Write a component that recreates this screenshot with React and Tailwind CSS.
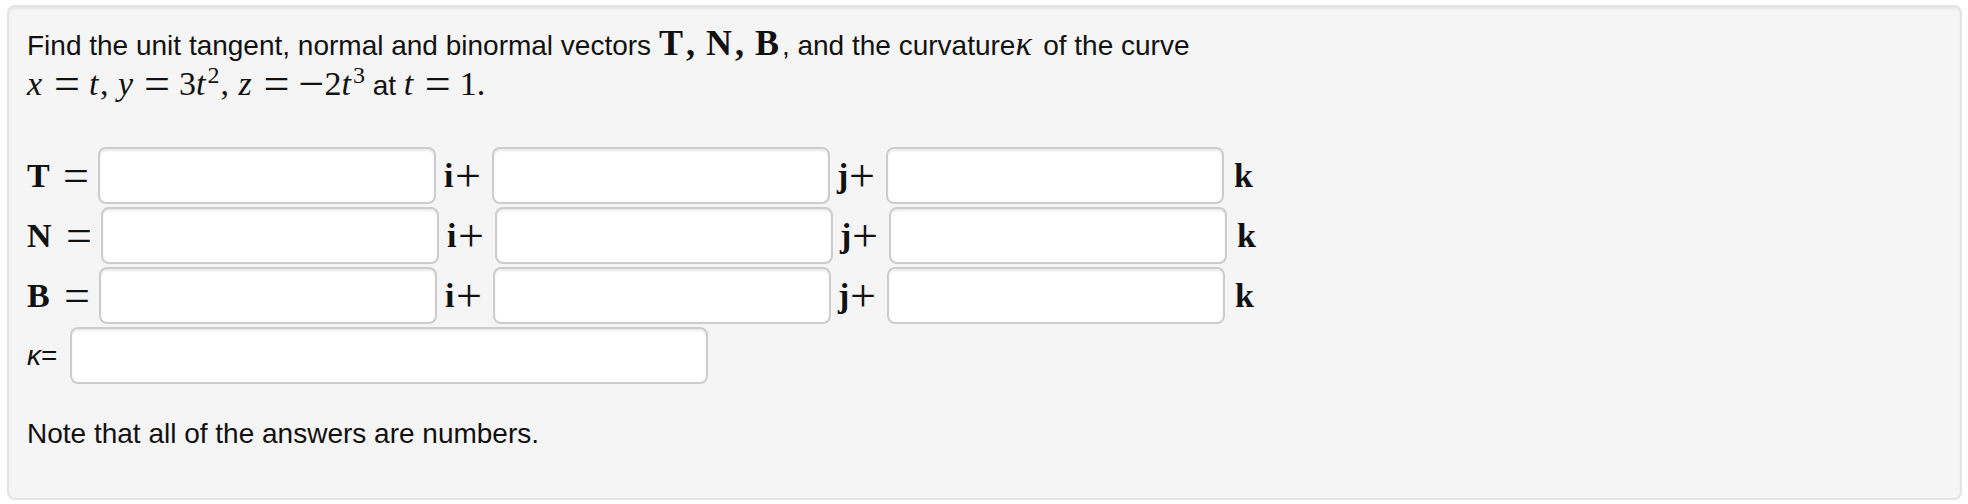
import React from 'react';

// wide "=" like the math font: bigger glyph, zero line-height so it never grows the line
const Rel = ({ children }) => (
  <span className="relative top-[4px] inline-block w-[26px] mx-[9px] text-center text-[46px] leading-[0]">{children}</span>
);

const Bin = ({ children }) => (
  <span className="relative top-[4px] inline-block w-[26px] text-center text-[46px] leading-[0]">{children}</span>
);

const AnswerBox = ({ w = 'w-[338px]' }) => (
  <input
    type="text"
    className={`${w} h-[57px] shrink-0 bg-white border-2 border-[#cccccc] rounded-[8px] shadow-[inset_0_2px_2px_rgba(0,0,0,0.075)] outline-none`}
  />
);

const VecRow = ({ label, labelW }) => (
  <div className="flex items-center h-[57px] font-['Liberation_Serif',serif] text-[34px]">
    <span className="leading-none">
      <span className={`inline-block ${labelW} font-bold`}>{label}</span>
      <Rel>=</Rel>
    </span>
    <AnswerBox />
    <span className="leading-none ml-[8px] mr-[11px]">
      <span className="inline-block w-[11px] font-bold">i</span>
      <Bin>+</Bin>
    </span>
    <AnswerBox />
    <span className="leading-none ml-[7px] mr-[11px]">
      <span className="inline-block w-[12px] font-bold">j</span>
      <Bin>+</Bin>
    </span>
    <AnswerBox />
    <span className="leading-none ml-[10px] font-bold">k</span>
  </div>
);

export default function App() {
  return (
    <div className="min-h-[504px] bg-white pt-[5px] pl-[7px] pr-[6px] text-[#111] font-['Liberation_Sans',Arial,sans-serif]">
      <div className="h-[495px] bg-[#f5f5f5] border-2 border-[#e3e3e3] rounded-[8px] shadow-[inset_0_2px_2px_rgba(0,0,0,0.05)] pt-[18px] px-[18px]">
        <p className="text-[28px] leading-[40px]">
          Find the unit tangent, normal and binormal vectors{' '}
          <span className="font-['Liberation_Serif',serif] text-[36px] leading-none font-bold">
            <span className="inline-block w-[27px]">T</span>
            <span className="inline-block w-[11px] mr-[9px]">,</span>
            <span className="inline-block w-[29px]">N</span>
            <span className="inline-block w-[11px] mr-[9px]">,</span>
            <span className="inline-block w-[27px]">B</span>
          </span>
          , and the curvature
          <span className="inline-block w-[20px] font-['Liberation_Serif',serif] italic text-[34px] leading-none">κ</span>
          {' '}of the curve
          <br />
          <span className="font-['Liberation_Serif',serif] text-[34px] leading-none">
            <span className="inline-block w-[18px] italic">x</span>
            <Rel>=</Rel>
            <span className="inline-block w-[11px] italic">t</span>
            <span className="inline-block w-[9px] mr-[9px]">,</span>
            <span className="inline-block w-[17px] italic">y</span>
            <Rel>=</Rel>
            <span className="inline-block w-[17px]">3</span>
            <span className="italic">t</span>
            <sup className="text-[24px] ml-[2px] mr-[1px]">2</sup>
            <span className="inline-block w-[9px] mr-[9px]">,</span>
            <span className="inline-block w-[16px] italic">z</span>
            <Rel>=</Rel>
            <Bin>−</Bin>
            <span className="inline-block w-[17px]">2</span>
            <span className="italic">t</span>
            <sup className="text-[24px] ml-[2px]">3</sup>
          </span>
          {' '}at{' '}
          <span className="font-['Liberation_Serif',serif] text-[34px] leading-none">
            <span className="inline-block w-[12px] italic">t</span>
            <Rel>=</Rel>
            <span className="inline-block w-[17px]">1</span>
            <span>.</span>
          </span>
        </p>

        <div className="mt-[41px] flex flex-col gap-[3px]">
          <VecRow label="T" labelW="w-[27px]" />
          <VecRow label="N" labelW="w-[30px]" />
          <VecRow label="B" labelW="w-[28px]" />
          <div className="flex items-center h-[57px]">
            <span className="text-[28px] leading-none w-[43px]">
              <span className="italic">κ</span>=
            </span>
            <AnswerBox w="w-[638px]" />
          </div>
        </div>

        <p className="mt-[30px] text-[28px] leading-[40px]">Note that all of the answers are numbers.</p>
      </div>
    </div>
  );
}
